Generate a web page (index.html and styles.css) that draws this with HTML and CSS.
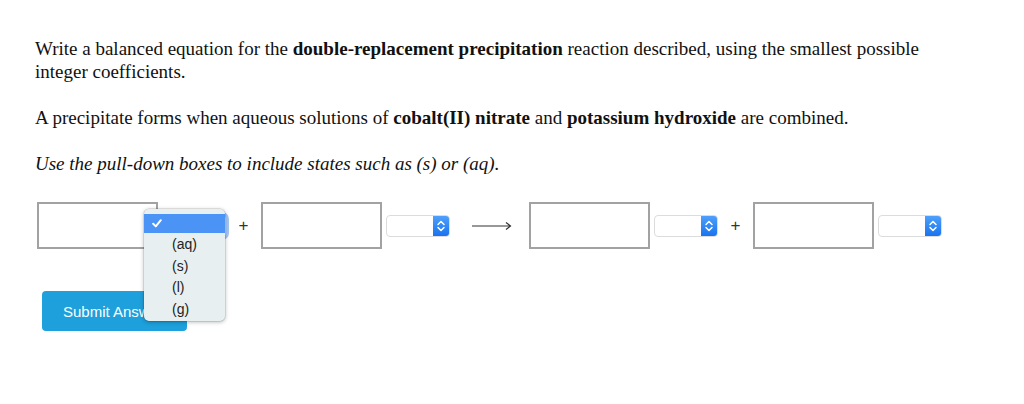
FILE: index.html
```html
<!DOCTYPE html>
<html>
<head>
<meta charset="utf-8">
<link rel="stylesheet" href="styles.css">
</head>
<body>
<div class="page">
  <p class="para">Write a balanced equation for the <b>double-replacement precipitation</b> reaction described, using the smallest possible integer coefficients.</p>
  <p class="para">A precipitate forms when aqueous solutions of <b>cobalt(II) nitrate</b> and <b>potassium hydroxide</b> are combined.</p>
  <p class="para"><i>Use the pull-down boxes to include states such as (s) or (aq).</i></p>
  <div class="equation">
    <div class="box"></div>
    <div class="sel sel-focus"><span class="sel-btn"><svg width="10" height="14" viewBox="0 0 10 14"><path d="M2 5.5 L5 2.5 L8 5.5 M2 8.5 L5 11.5 L8 8.5" fill="none" stroke="#fff" stroke-width="1.5" stroke-linecap="round" stroke-linejoin="round"/></svg></span></div>
    <span class="op plus">+</span>
    <div class="box"></div>
    <div class="sel"><span class="sel-btn"><svg width="10" height="14" viewBox="0 0 10 14"><path d="M2 5.5 L5 2.5 L8 5.5 M2 8.5 L5 11.5 L8 8.5" fill="none" stroke="#fff" stroke-width="1.5" stroke-linecap="round" stroke-linejoin="round"/></svg></span></div>
    <span class="op arrow"><svg width="40" height="10" viewBox="0 0 40 10"><path d="M0 5 H38.5 M34 1.5 L38.5 5 L34 8.5" fill="none" stroke="#333" stroke-width="1.2"/></svg></span>
    <div class="box"></div>
    <div class="sel"><span class="sel-btn"><svg width="10" height="14" viewBox="0 0 10 14"><path d="M2 5.5 L5 2.5 L8 5.5 M2 8.5 L5 11.5 L8 8.5" fill="none" stroke="#fff" stroke-width="1.5" stroke-linecap="round" stroke-linejoin="round"/></svg></span></div>
    <span class="op plus">+</span>
    <div class="box"></div>
    <div class="sel"><span class="sel-btn"><svg width="10" height="14" viewBox="0 0 10 14"><path d="M2 5.5 L5 2.5 L8 5.5 M2 8.5 L5 11.5 L8 8.5" fill="none" stroke="#fff" stroke-width="1.5" stroke-linecap="round" stroke-linejoin="round"/></svg></span></div>
  </div>
  <button class="submit">Submit Answer</button>
</div>
<div class="menu">
  <div class="menu-item selected"><svg class="check" width="10" height="9" viewBox="0 0 10 9"><path d="M1.2 4.8 L3.8 7.4 L8.8 1.2" fill="none" stroke="#fff" stroke-width="2" stroke-linecap="round" stroke-linejoin="round"/></svg></div>
  <div class="menu-item">(aq)</div>
  <div class="menu-item">(s)</div>
  <div class="menu-item">(l)</div>
  <div class="menu-item">(g)</div>
</div>
</body>
</html>
```
FILE: styles.css
```css
html, body {
  margin: 0;
  padding: 0;
  background: #fff;
}
body {
  position: relative;
  width: 1024px;
  height: 404px;
  overflow: hidden;
}
.page {
  padding: 37px 0 0 35px;
  font-family: "Liberation Serif", "Times New Roman", serif;
  font-size: 19px;
  line-height: 23px;
  color: #111;
}
.para {
  margin: 0 0 23px 0;
  width: 900px;
}
.equation {
  display: flex;
  align-items: center;
  margin-top: 27px;
  margin-left: 2px;
  height: 47px;
}
.box {
  width: 117px;
  height: 43px;
  border: 2px solid #a2a2a2;
  background: #fff;
  flex: none;
}
.sel {
  width: 62px;
  height: 20px;
  border: 1px solid #dcdcdc;
  border-radius: 4px;
  background: #fff;
  display: flex;
  justify-content: flex-end;
  margin-left: 4px;
  flex: none;
  overflow: hidden;
}
.sel-focus {
  box-shadow: 0 0 0 3px rgba(90, 150, 235, 0.55);
}
.sel-btn {
  width: 16px;
  height: 20px;
  background: linear-gradient(#4ea0fa, #1a73f0);
  display: flex;
  align-items: center;
  justify-content: center;
}
.op {
  font-family: "Liberation Sans", Arial, sans-serif;
  color: #333;
  flex: none;
}
.plus {
  font-size: 17px;
  width: 35px;
  text-align: center;
}
.arrow {
  display: flex;
  margin: 0 17px 0 22px;
}
.arrow svg {
  display: block;
}
.submit {
  display: block;
  margin: 42px 0 0 7px;
  width: 145px;
  height: 40px;
  border: none;
  border-radius: 4px;
  background: #1da0dc;
  color: #fff;
  font-family: "Liberation Sans", Arial, sans-serif;
  font-size: 15px;
  text-align: left;
  padding: 0 0 0 21px;
}
.menu {
  position: absolute;
  left: 144px;
  top: 209px;
  width: 81px;
  height: 107px;
  padding-top: 5px;
  border-radius: 5px;
  background: #e7eff0;
  box-shadow: 0 1px 4px rgba(0, 0, 0, 0.3), 0 0 0 0.5px rgba(0, 0, 0, 0.15);
  font-family: "Liberation Sans", Arial, sans-serif;
  font-size: 14px;
  color: #222;
}
.menu-item {
  height: 21.5px;
  line-height: 21.5px;
  padding-left: 28px;
}
.menu-item.selected {
  background: #4b93f5;
  height: 19px;
  margin-bottom: 1px;
  position: relative;
}
.check {
  position: absolute;
  left: 8px;
  top: 5px;
}
```
